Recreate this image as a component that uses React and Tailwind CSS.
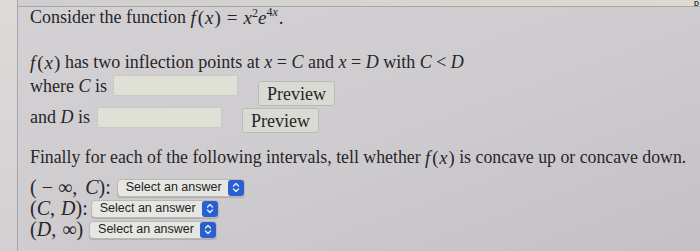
import React from "react";

const serif = { fontFamily: '"Liberation Serif", "Times New Roman", serif' };
const sans = { fontFamily: '"Liberation Sans", Arial, sans-serif' };

function M({ children }) {
  return <i className="italic">{children}</i>;
}

function Mx({ children, className = "text-[19px]" }) {
  return <span className={`inline-flex items-baseline ${className}`}>{children}</span>;
}

function Fx({ className }) {
  return (
    <Mx className={className}>
      <i className="mr-[1px] italic">f</i>
      <span className="mx-[1px]">(</span>
      <i className="italic">x</i>
      <span className="ml-[1px]">)</span>
    </Mx>
  );
}

function Sup({ children, y = "-top-[7px]" }) {
  return <span className={`relative ${y} text-[12px] leading-none`}>{children}</span>;
}

function Stepper() {
  return (
    <span className="flex h-full w-[16px] items-center justify-center rounded-[3px] bg-[#2a5fd0]">
      <svg width="8" height="11" viewBox="0 0 8 11" fill="none" stroke="#e8efff" strokeWidth="1.4" strokeLinecap="round" strokeLinejoin="round">
        <path d="M1.5 4 L4 1.5 L6.5 4" />
        <path d="M1.5 7 L4 9.5 L6.5 7" />
      </svg>
    </span>
  );
}

function Select() {
  return (
    <span className="inline-flex h-[18px] w-[128px] items-center rounded-[4px] border border-[#b9b8b6] bg-[#e6e6e2] pl-[8px] shadow-[0_1px_1px_rgba(0,0,0,0.15)]" style={sans}>
      <span className="flex-1 text-[12.5px] leading-none text-[#232323]">Select an answer</span>
      <Stepper />
    </span>
  );
}

function Input({ w }) {
  return <span className={`inline-block h-[21px] ${w} border border-[#c9cbc0] bg-[#dfe1d7]`} />;
}

function Preview() {
  return (
    <span className="inline-flex h-[25px] items-center rounded-[3px] border border-[#b9bbb2] bg-[#d9dad3] px-[8px] text-[18px] text-[#262626]">
      Preview
    </span>
  );
}

export default function App() {
  return (
    <div className="flex h-[251px] w-[700px] overflow-hidden bg-[#cdcacf]" style={serif}>
      <div className="w-[18px] shrink-0 border-r border-[#a7a4ac] bg-gradient-to-b from-[#dddbd9] to-[#d2d0d2]" />
      <div className="flex flex-1 flex-col bg-gradient-to-br from-[#d4d1d5] via-[#cfccd0] to-[#c4c0c6] text-[#262626]">
        <div className="relative h-[7px] shrink-0 border-b border-[#a9a7a6] bg-gradient-to-r from-[#cfcdcf] to-[#dddbcf]">
          <span className="absolute right-[1px] top-0 text-[7px] font-bold leading-none text-[#333]" style={sans}>D</span>
        </div>
        <div className="flex flex-col pl-[12px] text-[18px] leading-none">
          <div className="flex h-[20px] items-center">
            Consider the function&nbsp;
            <Fx />
            <Mx className="mx-[6px] text-[19px]">=</Mx>
            <Mx>
              <i className="italic">x</i>
              <Sup>2</Sup>
              <i className="italic">e</i>
              <Sup y="-top-[8px]">
                4<i className="italic">x</i>
              </Sup>
              <span className="ml-[1px]">.</span>
            </Mx>
          </div>
          <div className="mt-[25px] flex h-[20px] items-center">
            <Fx />
            &nbsp;has two inflection points at <M>&nbsp;x</M>&nbsp;=&nbsp;<M>C</M>&nbsp;and <M>&nbsp;x</M>&nbsp;=&nbsp;<M>D</M>&nbsp;with <M>&nbsp;C</M>&nbsp;&lt;&nbsp;<M>D</M>
          </div>
          <div className="mt-[3px] flex h-[27px] items-center">
            <span className="self-start pt-[2px]">
              where <M>C</M> is
            </span>
            <span className="ml-[6px] self-start">
              <Input w="w-[125px]" />
            </span>
            <span className="ml-[20px] mt-[6px] self-start">
              <Preview />
            </span>
          </div>
          <div className="mt-[3px] flex h-[30px] items-start">
            <span className="pt-[3px]">
              and <M>D</M> is
            </span>
            <span className="ml-[7px] mt-[2px]">
              <Input w="w-[125px]" />
            </span>
            <span className="ml-[20px] mt-[3px]">
              <Preview />
            </span>
          </div>
          <div className="mt-[13px] flex h-[20px] items-center text-[17.8px]">
            Finally for each of the following intervals, tell whether&nbsp;<Fx className="text-[18.5px]" />&nbsp;is concave up or concave down.
          </div>
          <div className="mt-[8px] flex h-[21px] items-center">
            <Mx className="text-[20px]">
              (<span className="mx-[5px]">−</span>∞,<i className="ml-[8px] italic">C</i>):
            </Mx>
            <span className="ml-[6px]">
              <Select />
            </span>
          </div>
          <div className="flex h-[21px] items-center">
            <Mx className="text-[20px]">
              (<i className="italic">C</i>,<i className="ml-[6px] italic">D</i>):
            </Mx>
            <span className="ml-[3px]">
              <Select />
            </span>
          </div>
          <div className="flex h-[21px] items-center">
            <Mx className="text-[20px]">
              (<i className="italic">D</i>,<span className="ml-[6px]">∞</span>)
            </Mx>
            <span className="ml-[6px]">
              <Select />
            </span>
          </div>
        </div>
      </div>
    </div>
  );
}
